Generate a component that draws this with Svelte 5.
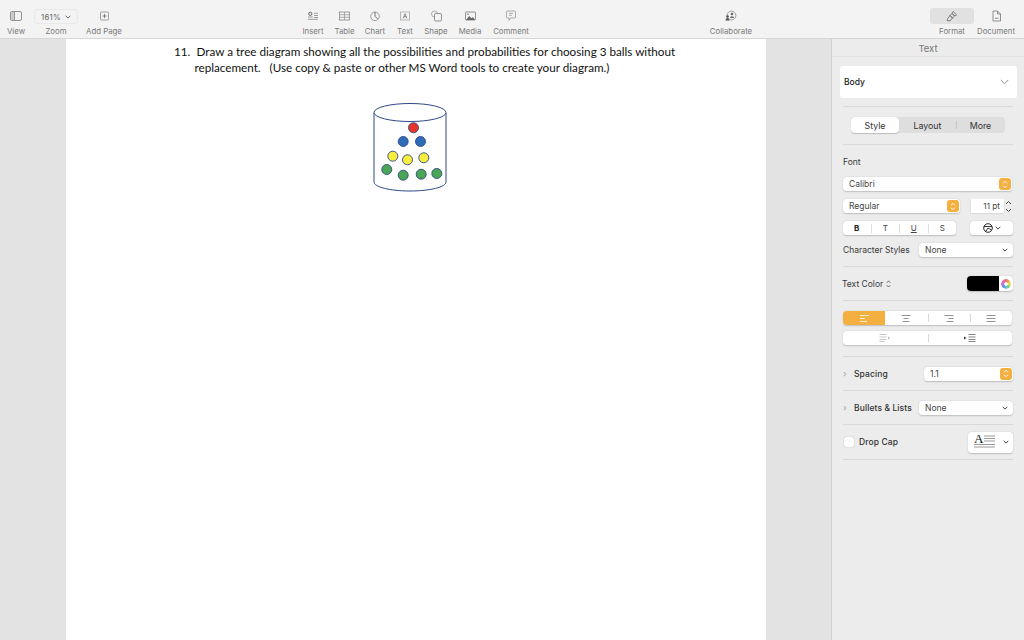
<script>
  // ball positions inside the jar drawing
  const balls = [
    { x: 43.5, y: 29.8, c: '#e8352a' },
    { x: 33.2, y: 43.5, c: '#2f6cb8' },
    { x: 50.5, y: 43.5, c: '#2f6cb8' },
    { x: 22.8, y: 58.2, c: '#f7ee3e' },
    { x: 37.5, y: 61.8, c: '#f7ee3e' },
    { x: 53.8, y: 59.8, c: '#f7ee3e' },
    { x: 16.8, y: 71.5, c: '#4aa655' },
    { x: 33.2, y: 77.2, c: '#4aa655' },
    { x: 51.2, y: 76.2, c: '#4aa655' },
    { x: 66.8, y: 75.5, c: '#4aa655' }
  ];
  const wheelColors = ['#f0646a', '#f3b04c', '#e9e35a', '#7fd07a', '#58c7e0', '#6d8df0', '#c06fe0', '#ee6bb0'];
</script>

{#snippet updown(w = 9)}
  <span class="updown" style="width:{w + 3}px">
    <svg width="6" height="9" viewBox="0 0 6 9"><path d="M1 3.3 3 1.3 5 3.3M1 5.7 3 7.7 5 5.7" fill="none" stroke="#fff" stroke-width="1"/></svg>
  </span>
{/snippet}

{#snippet chev()}
  <svg class="chev" width="6" height="4" viewBox="0 0 6 4"><path d="M.7.8 3 3.1 5.3.8" fill="none" stroke="#444" stroke-width="1"/></svg>
{/snippet}

<div class="app">
  <header class="toolbar">
    <div class="tool w32">
      <svg width="12" height="10" viewBox="0 0 12 10"><rect x=".5" y=".5" width="11" height="9" rx="1.5" fill="none" stroke="#777" stroke-width=".8"/><rect x="1" y="1" width="3.500" height="8" fill="#ccc"/><path d="M4.500 1v8" stroke="#777" stroke-width=".7"/></svg>
      <span>View</span>
    </div>
    <div class="tool w48">
      <div class="zoom">161% <svg width="6" height="4" viewBox="0 0 6 4"><path d="M.7.8 3 3.1 5.3.8" fill="none" stroke="#666"/></svg></div>
      <span>Zoom</span>
    </div>
    <div class="tool w48">
      <svg width="9" height="9" viewBox="0 0 9 9"><rect x=".5" y=".5" width="8" height="8" rx=".8" fill="none" stroke="#888" stroke-width=".8"/><path d="M4.500 2.500v4M2.500 4.500h4" stroke="#666" stroke-width=".8"/></svg>
      <span>Add Page</span>
    </div>

    <div class="tool insert" style="width:32px">
      <svg width="10" height="8" viewBox="0 0 10 8"><circle cx="2.300" cy="1.800" r="1.600" fill="none" stroke="#555" stroke-width=".9"/><path d="M0 5h4.800M0 7.300h10M6 1.300h4M6 3.500h4M6 5.500h4" stroke="#888" stroke-width=".8"/></svg>
      <span>Insert</span>
    </div>
    <div class="tool" style="width:31px">
      <svg width="11" height="9" viewBox="0 0 11 9"><rect x=".5" y=".5" width="10" height="8" fill="none" stroke="#888" stroke-width=".8"/><path d="M.5 3.200h10M.5 5.800h10M5.500 .5v8" stroke="#999" stroke-width=".8"/></svg>
      <span>Table</span>
    </div>
    <div class="tool" style="width:30px">
      <svg width="10" height="11" viewBox="0 0 10 11"><circle cx="5" cy="5.800" r="4.300" fill="none" stroke="#888" stroke-width=".8"/><path d="M5 1.500v4.300l2.600 2.600" fill="none" stroke="#666" stroke-width=".9"/></svg>
      <span>Chart</span>
    </div>
    <div class="tool" style="width:30px">
      <svg width="10" height="9" viewBox="0 0 10 9"><rect x=".5" y=".5" width="9" height="8" fill="none" stroke="#aaa" stroke-width=".8"/><path d="M3.200 6.800 5 2.200l1.800 4.600M3.900 5.200h2.200" fill="none" stroke="#666" stroke-width=".7"/></svg>
      <span>Text</span>
    </div>
    <div class="tool" style="width:32px">
      <svg width="11" height="11" viewBox="0 0 11 11"><circle cx="3.500" cy="3.500" r="3" fill="none" stroke="#999" stroke-width=".8"/><rect x="3.500" y="3" width="7" height="7.500" rx="1.200" fill="#f3f3f3" stroke="#777" stroke-width=".8"/></svg>
      <span>Shape</span>
    </div>
    <div class="tool" style="width:36px">
      <svg width="11" height="9" viewBox="0 0 11 9"><rect x=".5" y=".5" width="10" height="8" rx=".8" fill="none" stroke="#777" stroke-width=".8"/><path d="M1 8.500 4.200 4.500 6.500 6.800 8 5.500 10 8.500z" fill="#666"/><circle cx="3" cy="2.800" r=".8" fill="#777"/></svg>
      <span>Media</span>
    </div>
    <div class="tool" style="width:46px">
      <svg width="10" height="11" viewBox="0 0 10 11"><path d="M1.500.5h7a1 1 0 0 1 1 1v5a1 1 0 0 1-1 1H4.500L3 10V7.500H1.500a1 1 0 0 1-1-1v-5a1 1 0 0 1 1-1z" fill="none" stroke="#999" stroke-width=".8"/><path d="M3 2.800h4M3 4.800h2.800" stroke="#888" stroke-width=".7"/></svg>
      <span>Comment</span>
    </div>

    <div class="tool collab" style="width:60px">
      <svg width="12" height="11" viewBox="0 0 12 11"><circle cx="6.500" cy="5" r="4.400" fill="none" stroke="#888" stroke-width=".8"/><circle cx="7" cy="3.500" r="1.300" fill="#666"/><circle cx="2.500" cy="6" r="1.300" fill="#555"/><path d="M.5 10c0-1.500 1-2.500 2-2.500s2 1 2 2.500z" fill="#555"/><path d="M5 7.500c0-1 1-1.800 2-1.800s2 .8 2 1.800z" fill="#666"/></svg>
      <span>Collaborate</span>
    </div>

    <div class="tool format" style="width:44px">
      <div class="pill">
        <svg width="12" height="12" viewBox="0 0 12 12"><path d="M7.200 1.500 10.500 4.800 8.800 6 6 3.200zM6 3.500 8.600 6.100 6.500 8 4 5.500zM4 5.500 6.500 8 4 11 1 10.500 1.800 8.500z" fill="none" stroke="#666" stroke-width=".8"/></svg>
      </div>
      <span>Format</span>
    </div>
    <div class="tool" style="width:44px">
      <svg width="9" height="11" viewBox="0 0 9 11"><path d="M1 .5h4.500L8.500 3.500v7H1zM5.500 .5v3h3M3 7.800h3.500" fill="none" stroke="#777" stroke-width=".8"/></svg>
      <span>Document</span>
    </div>
  </header>

  <div class="main">
    <div class="canvas">
      <article class="page">
        <div class="question">
          <span class="num">11.</span>
          <p>Draw a tree diagram showing all the possibilities and probabilities for choosing 3 balls without<br>replacement. &nbsp; (Use copy &amp; paste or other MS Word tools to create your diagram.)</p>
        </div>
        <svg class="tank" width="80" height="94" viewBox="0 0 80 94">
          <path d="M4 15v69c0 5 16 9 36 9s36-4 36-9V15" fill="#fff" stroke="#2e4a86" stroke-width="1"/>
          <ellipse cx="40" cy="14.500" rx="36" ry="9" fill="#fff" stroke="#2e4a86" stroke-width="1"/>
          {#each balls as b}
            <circle cx={b.x} cy={b.y} r="5" fill={b.c} stroke="#2e4a86" stroke-width=".9"/>
          {/each}
        </svg>
      </article>
    </div>

    <aside class="side">
      <div class="side-title">Text</div>
      <div class="style-box"><b>Body</b>
        <svg width="9" height="6" viewBox="0 0 9 6"><path d="M.8 1 4.500 4.700 8.200 1" fill="none" stroke="#888" stroke-width="1"/></svg>
      </div>
      <section class="tabs-sec">
        <div class="tabs">
          <div class="tab on">Style</div>
          <div class="tab layout">Layout</div>
          <div class="tab sep">More</div>
        </div>
      </section>
      <section class="font-sec">
        <div class="label font-label">Font</div>
        <div class="ctl full">Calibri{@render updown()}</div>
        <div class="row">
          <div class="ctl regular">Regular{@render updown()}</div>
          <div class="pt">11 pt</div>
          <svg class="stepper" width="7" height="13" viewBox="0 0 7 13"><path d="M1 4 3.500 1.500 6 4M1 9 3.500 11.500 6 9" fill="none" stroke="#444" stroke-width="1"/></svg>
        </div>
        <div class="row">
          <div class="biu">
            <span class="bold">B</span><span class="it">T</span><span class="ul">U</span><span class="st">S</span>
          </div>
          <div class="ctl gear">
            <svg width="10" height="10" viewBox="0 0 10 10"><circle cx="5" cy="5" r="4.300" fill="none" stroke="#222" stroke-width="1"/><path d="M1 3.500h8M5 5 2.500 8.800M5 5l3.500 2" stroke="#222" stroke-width=".9"/></svg>
            {@render chev()}
          </div>
        </div>
        <div class="row labelled">
          <span class="label">Character Styles</span>
          <div class="ctl sel">None{@render chev()}</div>
        </div>
      </section>
      <section class="color-sec">
        <span class="label">Text Color
          <svg width="5" height="8" viewBox="0 0 5 8"><path d="M.7 2.800 2.500 1 4.300 2.800M.7 5.200 2.500 7 4.300 5.200" fill="none" stroke="#444" stroke-width=".8"/></svg>
        </span>
        <div class="swatch">
          <span class="black"></span>
          <span class="wheelbox"><span class="wheel" style="background:conic-gradient({wheelColors.join(',')},{wheelColors[0]})"></span></span>
        </div>
      </section>
      <section class="align-sec">
        <div class="seg">
          <span class="on"><svg width="11" height="7" viewBox="0 0 11 7"><path d="M1 .5h9M1 3.500h5M1 6.500h7" stroke="#fff" stroke-width=".8"/></svg></span>
          <span><svg width="10" height="7" viewBox="0 0 10 7"><path d="M.5.500h9M2.500 3.500h5M1.500 6.500h7" stroke="#777" stroke-width=".8"/></svg></span>
          <span class="bar"><svg width="10" height="7" viewBox="0 0 10 7"><path d="M.5.500h9M4.500 3.500h5M2.500 6.500h7" stroke="#777" stroke-width=".8"/></svg></span>
          <span class="bar"><svg width="10" height="7" viewBox="0 0 10 7"><path d="M.5.500h9M.5 3.500h9M.5 6.500h9" stroke="#777" stroke-width=".8"/></svg></span>
        </div>
        <div class="seg two">
          <span><svg width="12" height="8" viewBox="0 0 12 8"><path d="M.5.500h7M.5 3h7M.5 5.500h7M.5 7.500h5" stroke="#bbb" stroke-width=".8"/><path d="M9 2.500 11 4 9 5.500z" fill="#bbb"/></svg></span>
          <span class="bar"><svg width="12" height="8" viewBox="0 0 12 8"><path d="M4.500.500h7M4.500 3h7M4.500 5.500h7M4.500 7.500h7" stroke="#666" stroke-width=".8"/><path d="M0 2.500 2.500 4 0 5.500z" fill="#333"/></svg></span>
        </div>
      </section>
      <section class="line-sec">
        <span class="label strong"><i>›</i>Spacing</span>
        <div class="ctl spacing">1.1{@render updown()}</div>
      </section>
      <section class="line-sec">
        <span class="label strong"><i>›</i>Bullets &amp; Lists</span>
        <div class="ctl sel">None{@render chev()}</div>
      </section>
      <section class="cap-sec">
        <span class="label strong cap"><span class="check"></span>Drop Cap</span>
        <div class="ctl capsel">
          <span class="cap-a">A</span>
          <svg class="cap-lines" width="21" height="13" viewBox="0 0 21 13"><path d="M10 1h11M10 3.500h11M10 6h11M0 9.500h21M0 12h21" stroke="#999" stroke-width="1.100"/></svg>
          {@render chev()}
        </div>
      </section>
    </aside>
  </div>
</div>

<style>
  :global(body) { margin: 0; overflow: hidden; }
  .app { width: 1024px; height: 640px; display: flex; flex-direction: column; overflow: hidden; font-family: Inter, "Liberation Sans", sans-serif; color: #333; }

  .toolbar { height: 39px; flex: none; display: flex; box-sizing: border-box; background: #f3f3f3; border-bottom: 1px solid #d6d6d6; }
  .tool { flex: none; display: flex; flex-direction: column; align-items: center; height: 38px; padding-top: 10px; box-sizing: border-box; position: relative; }
  .tool svg { display: block; height: 12px; }
  .tool > span { position: absolute; top: 26px; left: 50%; transform: translateX(-50%); font-size: 7.800px; line-height: 10px; color: #7a7a7a; white-space: nowrap; }
  .w32 { width: 32px; }
  .w48 { width: 48px; }
  .insert { margin-left: 169px; }
  .collab { margin-left: 167px; }
  .format { margin-left: 169px; }
  .zoom { position: absolute; top: 9px; left: 2px; width: 44px; height: 15px; box-sizing: border-box; display: flex; align-items: center; justify-content: center; gap: 4px; border: 1px solid #e9e9e9; border-radius: 3px; font-size: 7.800px; letter-spacing: .3px; color: #666; }
  .zoom svg { height: 4px; }
  .pill { position: absolute; top: 8px; left: 0; width: 44px; height: 16px; display: flex; align-items: center; justify-content: center; background: #e1e1e1; border-radius: 3px; }

  .main { flex: 1; display: flex; min-height: 0; }
  .canvas { width: 831px; background: #e3e3e3; flex: none; padding-left: 66px; box-sizing: border-box; }
  .page { width: 700px; height: 100%; background: #fff; padding: 5px 0 0 108px; box-sizing: border-box; }
  .question { display: flex; font-family: Lato, "Open Sans", sans-serif; font-size: 11.700px; line-height: 15.500px; color: #111; white-space: nowrap; }
  .num { width: 20.500px; flex: none; }
  .question p { margin: 0; text-indent: 2px; }
  .tank { display: block; margin: 22.500px 0 0 195.500px; }

  .side { flex: 1; background: #ececec; border-left: 1px solid #d2d2d2; box-sizing: border-box; font-size: 8.500px; }
  .side-title { height: 18px; padding-top: 2px; display: flex; align-items: center; justify-content: center; font-size: 9.500px; color: #777; border-bottom: 1px solid #e4e4e4; box-sizing: border-box; }
  .style-box { margin: 9px 7px 8px 8px; height: 32px; background: #fff; border-radius: 3px; display: flex; align-items: center; justify-content: space-between; padding: 0 8px 0 4px; box-sizing: border-box; }
  .style-box b { font-weight: 500; font-size: 8.500px; color: #222; }
  section { margin: 0 11px; border-top: 1px solid #d9d9d9; box-sizing: border-box; }
  .tabs-sec { height: 38px; display: flex; justify-content: center; padding-top: 10px; }
  .tabs { width: 154px; height: 16px; display: flex; background: #dedede; border-radius: 4px; }
  .tab { flex: 1; display: flex; align-items: center; justify-content: center; font-size: 8.800px; color: #333; position: relative; }
  .tab.on { flex: none; width: 48px; background: #fff; border-radius: 4px; box-shadow: 0 .5px 1px #0003; }
  .tab.layout { flex: none; width: 57px; }
  .tab.sep::before { content: ''; position: absolute; left: 0; top: 4px; height: 8px; border-left: 1px solid #c6c6c6; }
  .label { color: #3a3a3a; font-size: 8.500px; white-space: nowrap; }
  .font-sec { height: 122px; padding-top: 11px; }
  .font-label { line-height: 12px; margin-bottom: 9px; }
  .ctl { height: 14px; background: #fff; border-radius: 3.500px; box-shadow: 0 .5px 1.500px #0003; display: flex; align-items: center; justify-content: space-between; box-sizing: border-box; padding: 0 1px 0 6px; font-size: 8.500px; color: #444; }
  .full { width: 169px; }
  .updown { height: 12px; background: #f3b041; border-radius: 3px; display: flex; align-items: center; justify-content: center; }
  .updown svg { display: block; }
  .row { display: flex; align-items: center; margin-top: 8px; height: 14px; }
  .regular { width: 117px; }
  .pt { margin-left: 11px; width: 33px; height: 14px; background: #fff; box-shadow: 0 .5px 1.500px #0003; font-size: 8.200px; display: flex; align-items: center; justify-content: flex-end; padding-right: 4px; box-sizing: border-box; color: #444; }
  .stepper { margin-left: 1px; }
  .biu { width: 113px; height: 14px; background: #fff; border-radius: 3.500px; box-shadow: 0 .5px 1.500px #0003; display: flex; align-items: center; }
  .biu span { flex: 1; text-align: center; font-size: 8px; color: #444; border-left: 1px solid #ddd; line-height: 9px; }
  .biu span:first-child { border-left: 0; }
  .bold { font-weight: 700; color: #222 !important; }
  .ul { text-decoration: underline; }
  .gear { width: 43px; margin-left: 14px; justify-content: center; gap: 2px; padding: 0; }
  .labelled { justify-content: space-between; }
  .sel { width: 94px; padding-right: 5px; }
  .color-sec { height: 34px; display: flex; align-items: center; justify-content: space-between; padding-left: 0; }
  .color-sec .label { margin-left: -1px; display: flex; align-items: center; gap: 3px; }
  .swatch { width: 46px; height: 15px; display: flex; background: #fff; border-radius: 4px; box-shadow: 0 .5px 1.500px #0003; overflow: hidden; }
  .black { width: 32px; background: #000; }
  .wheelbox { flex: 1; display: flex; align-items: center; justify-content: center; }
  .wheel { width: 10px; height: 10px; border-radius: 50%; -webkit-mask: radial-gradient(circle, transparent 1.500px, #000 2px); mask: radial-gradient(circle, transparent 1.500px, #000 2px); }
  .align-sec { height: 56px; padding-top: 10px; }
  .seg { height: 14px; background: #fff; border-radius: 3.500px; box-shadow: 0 .5px 1.500px #0003; display: flex; overflow: hidden; width: 169px; }
  .seg + .seg { margin-top: 6px; }
  .seg span { flex: 1; display: flex; align-items: center; justify-content: center; position: relative; }
  .seg svg { display: block; }
  .seg .on { background: #f3b041; }
  .seg .bar::before { content: ''; position: absolute; left: 0; top: 3px; height: 8px; border-left: 1px solid #d8d8d8; }
  .line-sec { height: 34px; display: flex; align-items: center; justify-content: space-between; }
  .strong { font-weight: 500; color: #333; display: flex; align-items: center; letter-spacing: .1px; }
  .strong i { font-style: normal; color: #aaa; width: 11px; font-size: 9px; }
  .spacing { width: 89px; }
  .cap-sec { height: 36px; display: flex; align-items: center; justify-content: space-between; border-bottom: 1px solid #d9d9d9; }
  .cap { gap: 5px; margin-left: 1px; }
  .check { width: 10px; height: 10px; background: #fff; border-radius: 2px; box-shadow: 0 0 1px #0006; }
  .capsel { width: 45px; height: 21px; padding: 0 4px 0 6px; position: relative; justify-content: flex-end; }
  .cap-a { position: absolute; left: 6px; top: 1px; font-family: "Liberation Serif", serif; font-size: 13px; line-height: 12px; color: #111; }
  .cap-lines { position: absolute; left: 6px; top: 3px; }
</style>
